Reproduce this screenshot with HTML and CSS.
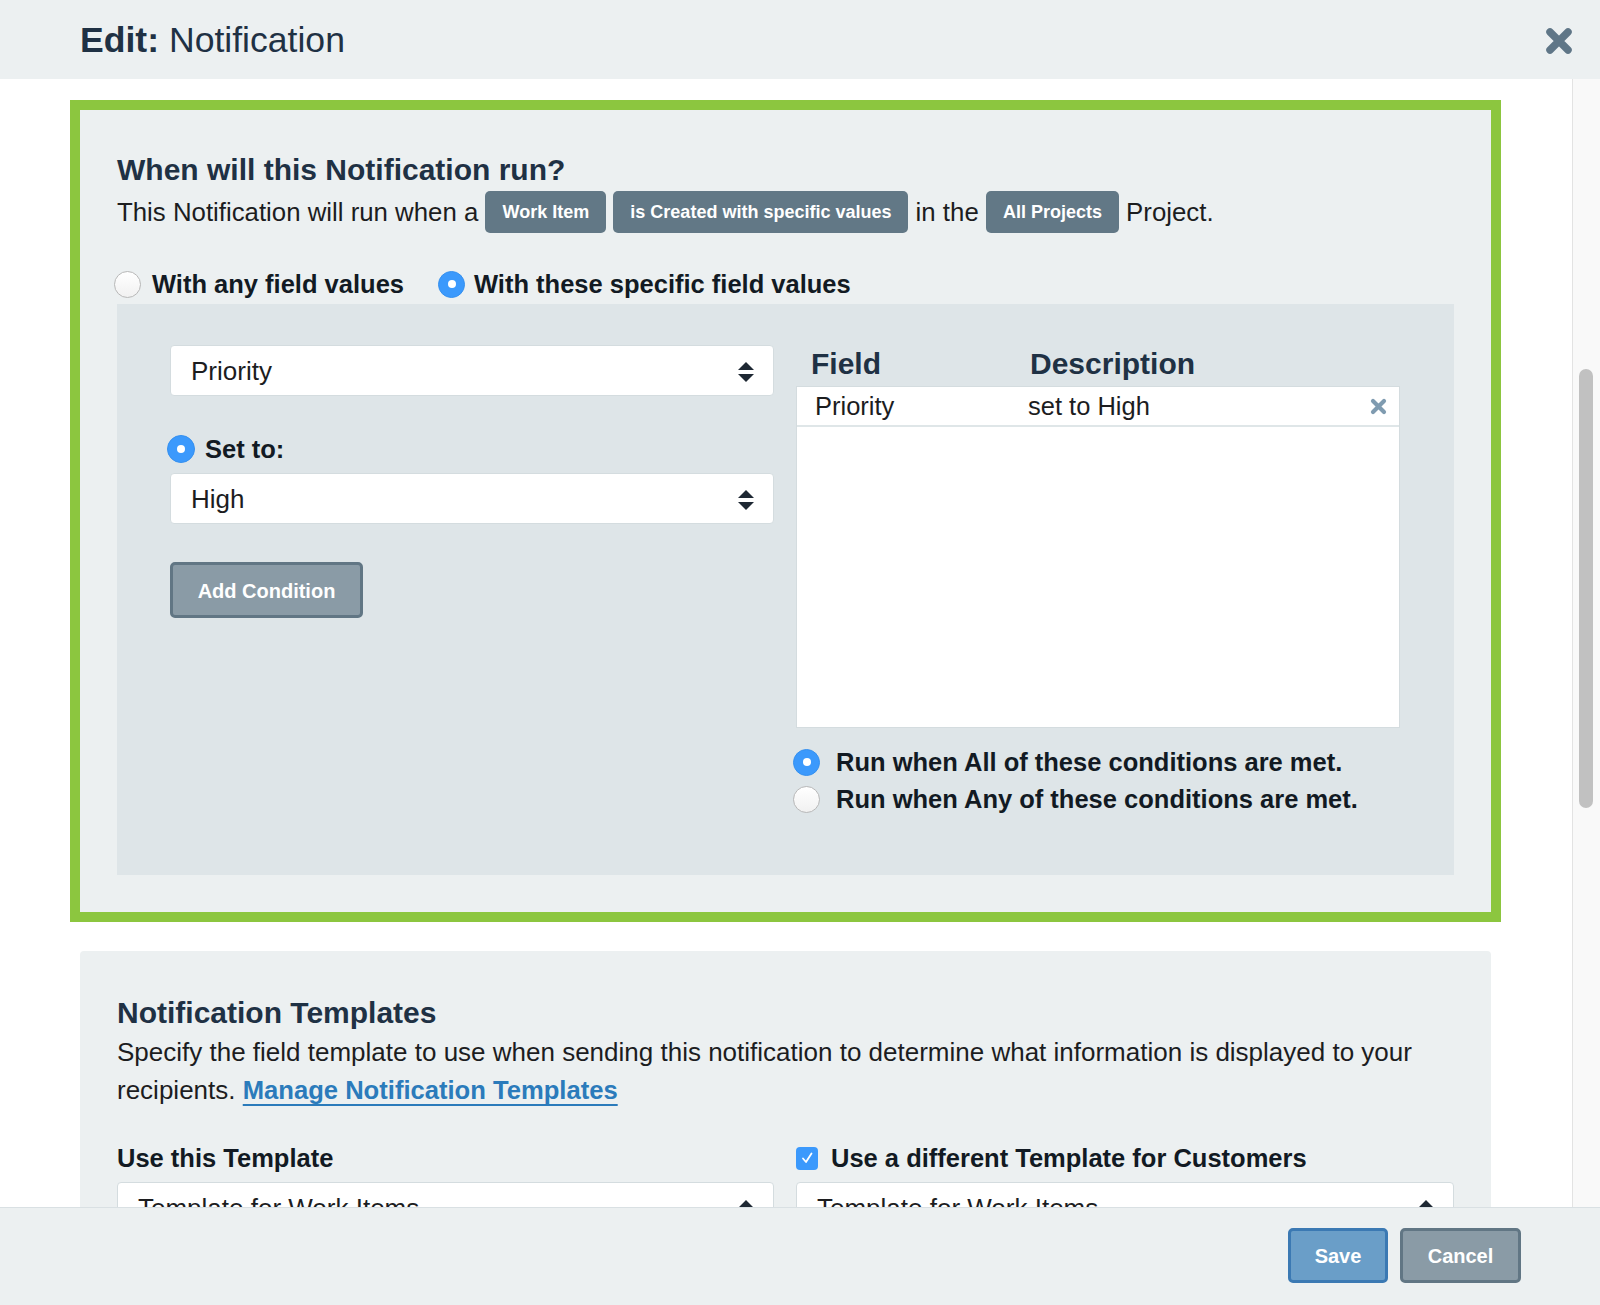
FILE: index.html
```html
<!DOCTYPE html>
<html lang="en">
<head>
<meta charset="utf-8">
<title>Edit: Notification</title>
<link rel="stylesheet" href="styles.css">
</head>
<body>
<div class="modal">
  <header class="modal-header">
    <h1 class="modal-title"><b>Edit:</b> Notification</h1>
    <button class="close" aria-label="Close">
      <svg width="28" height="30" viewBox="0 0 28 30"><path d="M5 6 L23 24 M23 6 L5 24" stroke="#5f7687" stroke-width="7.5" stroke-linecap="round" fill="none"/></svg>
    </button>
  </header>

  <div class="modal-body">
    <div class="content">
      <section class="card card-focus">
        <h2 class="card-title">When will this Notification run?</h2>
        <p class="trigger">This Notification will run when a <span class="pill">Work Item</span> <span class="pill">is Created with specific values</span> in the <span class="pill">All Projects</span> Project.</p>

        <div class="mode">
          <label class="radio mode-any"><span class="dot"></span>With any field values</label>
          <label class="radio on"><span class="dot"></span>With these specific field values</label>
        </div>

        <div class="panel">
          <div class="panel-left">
            <div class="select"><span>Priority</span>
              <svg class="updown" width="16" height="20" viewBox="0 0 16 20"><path d="M8 0 L16 8 L0 8 Z M0 12 L16 12 L8 20 Z" fill="#1e2833"/></svg>
            </div>
            <label class="radio on set-to"><span class="dot"></span>Set to:</label>
            <div class="select select-high"><span>High</span>
              <svg class="updown" width="16" height="20" viewBox="0 0 16 20"><path d="M8 0 L16 8 L0 8 Z M0 12 L16 12 L8 20 Z" fill="#1e2833"/></svg>
            </div>
            <button class="btn btn-gray add-btn">Add Condition</button>
          </div>
          <div class="panel-right">
            <div class="cond-head"><span class="col-field">Field</span><span>Description</span></div>
            <div class="cond-table">
              <div class="cond-row">
                <span class="col-field">Priority</span>
                <span class="col-desc">set to High</span>
                <svg class="row-x" width="17" height="17" viewBox="0 0 17 17"><path d="M3 3 L14 14 M14 3 L3 14" stroke="#7f9bb0" stroke-width="4.2" stroke-linecap="round" fill="none"/></svg>
              </div>
            </div>
            <div class="run">
              <label class="radio on run-opt"><span class="dot"></span>Run when All of these conditions are met.</label>
              <label class="radio run-opt"><span class="dot"></span>Run when Any of these conditions are met.</label>
            </div>
          </div>
        </div>
      </section>

      <section class="card card-templates">
        <h2 class="card-title">Notification Templates</h2>
        <p class="desc">Specify the field template to use when sending this notification to determine what information is displayed to your recipients. <a class="link" href="#">Manage Notification Templates</a></p>
        <div class="tpl-grid">
          <div class="tpl-col">
            <div class="tpl-label">Use this Template</div>
            <div class="select tpl-select"><span>Template for Work Items</span>
              <svg class="updown" width="16" height="20" viewBox="0 0 16 20"><path d="M8 0 L16 8 L0 8 Z M0 12 L16 12 L8 20 Z" fill="#1e2833"/></svg>
            </div>
          </div>
          <div class="tpl-col">
            <label class="tpl-label check-label"><span class="checkbox"><svg width="14" height="14" viewBox="0 0 14 14"><path d="M3 7.5 L6 11 L11.5 2.5" stroke="#fff" stroke-width="1.8" fill="none" stroke-linecap="round" stroke-linejoin="round"/></svg></span>Use a different Template for Customers</label>
            <div class="select tpl-select"><span>Template for Work Items</span>
              <svg class="updown" width="16" height="20" viewBox="0 0 16 20"><path d="M8 0 L16 8 L0 8 Z M0 12 L16 12 L8 20 Z" fill="#1e2833"/></svg>
            </div>
          </div>
        </div>
      </section>
    </div>
    <div class="scrollbar"><div class="thumb"></div></div>
  </div>

  <footer class="modal-footer">
    <button class="btn btn-blue">Save</button>
    <button class="btn btn-gray">Cancel</button>
  </footer>
</div>
</body>
</html>
```

FILE: styles.css
```css
* { box-sizing: border-box; margin: 0; padding: 0; }
html, body { width: 1600px; height: 1305px; overflow: hidden; }
body {
  font-family: "Liberation Sans", Arial, Helvetica, sans-serif;
  color: #1c1d1f;
  background: #fff;
}

.modal { display: flex; flex-direction: column; height: 1305px; }

.modal-header {
  height: 79px;
  flex: none;
  background: #ecf0f1;
  display: flex;
  align-items: center;
  justify-content: space-between;
  padding: 0 27px 0 80px;
}
.modal-title { font-size: 35.6px; font-weight: 400; color: #1f3144; margin-top: 2px; }
.modal-title b { font-weight: 700; }
.close { border: 0; background: none; display: block; width: 28px; height: 30px; margin-top: 2px; }
.close svg { display: block; }

.modal-body { flex: 1; display: flex; min-height: 0; overflow: hidden; }
.content { flex: 1; padding: 21px 0 0 70px; overflow: hidden; }
.scrollbar {
  width: 28px;
  flex: none;
  background: #f9f9f9;
  border-left: 1px solid #e3e3e3;
  padding: 290px 0 0 6px;
}
.thumb { width: 14px; height: 439px; border-radius: 7px; background: #c1c1c1; }

.card { background: #ecf0f1; }
.card-focus {
  border: 10px solid #8cc63f;
  width: 1431px;
  height: 822px;
  padding: 42px 37px 0;
}
.card-templates {
  width: 1411px;
  margin: 29px 0 0 10px;
  border-radius: 4px;
  padding: 44px 37px 40px;
}

.card-title { font-size: 30px; line-height: 36px; font-weight: 700; color: #1f3144; }

.trigger { font-size: 25.8px; line-height: 42px; margin-top: 3px; color: #1c1d1f; }
.pill {
  display: inline-block;
  vertical-align: top;
  height: 42px;
  line-height: 42px;
  padding: 0 17px;
  border-radius: 5px;
  background: #627886;
  color: #fff;
  font-size: 18px;
  font-weight: 700;
}

.radio {
  display: flex;
  align-items: center;
  font-size: 25.5px;
  font-weight: 700;
  color: #121a23;
}
.dot {
  position: relative;
  flex: none;
  width: 27px;
  height: 27px;
  border-radius: 50%;
  border: 1px solid #b8b8b8;
  background: linear-gradient(#ffffff, #f1f1f1);
  margin-right: 10px;
}
.radio.on .dot { background: #3b99fc; border-color: #3590ef; }
.radio.on .dot::after {
  content: "";
  position: absolute;
  left: 50%;
  top: 50%;
  width: 8px;
  height: 8px;
  margin: -4px 0 0 -4px;
  border-radius: 50%;
  background: #fff;
}

.mode { display: flex; align-items: center; height: 40px; margin-top: 31px; margin-left: -3px; }
.mode-any { margin-right: 34px; }
.mode-any .dot { margin-right: 11px; }
.mode .radio.on .dot { margin-right: 9px; }

.panel {
  margin-top: 0;
  height: 571px;
  background: #dee5e8;
  display: grid;
  grid-template-columns: 657px 1fr;
  column-gap: 22px;
}
.panel-left { padding: 41px 0 0 53px; }
.panel-right { padding: 42px 54px 0 0; }

.select {
  height: 51px;
  background: #fff;
  border: 1px solid #d4dcdf;
  border-radius: 4px;
  display: flex;
  align-items: center;
  justify-content: space-between;
  padding: 2px 19px 0 20px;
  font-size: 26px;
  color: #1c1d1f;
}
.updown { display: block; flex: none; }

.set-to { margin-top: 39px; height: 28px; margin-left: -3px; }
.set-to .dot { width: 28px; height: 28px; }
.select-high { margin-top: 10px; }

.btn {
  display: inline-flex;
  align-items: center;
  justify-content: center;
  height: 55px;
  padding: 0 24px;
  border-radius: 5px;
  border: 3px solid;
  font-family: inherit;
  font-size: 20px;
  font-weight: 700;
  color: #fff;
}
.btn-gray { background: #8a9ba6; border-color: #617684; }
.btn-blue { background: #6a9ec8; border-color: #3b79b3; }
.add-btn { margin-top: 38px; height: 56px; width: 193px; padding-top: 3px; }

.cond-head {
  display: flex;
  height: 36px;
  line-height: 36px;
  font-size: 30px;
  font-weight: 700;
  color: #1f3144;
  padding-left: 15px;
}
.cond-head .col-field { width: 219px; }
.cond-table {
  margin-top: 4px;
  height: 342px;
  background: #fff;
  border: 1px solid #d4dcdf;
}
.cond-row {
  height: 40px;
  display: flex;
  align-items: center;
  padding: 1px 12px 0 18px;
  font-size: 25.5px;
  border-bottom: 2px solid #dfe6e8;
}
.cond-row .col-field { width: 213px; }
.cond-row .col-desc { flex: 1; }
.row-x { display: block; flex: none; }

.run { margin-top: 18px; display: flex; flex-direction: column; gap: 5px; }
.run-opt { height: 32px; margin-left: -3px; }
.run-opt .dot { margin-right: 16px; }

.desc { font-size: 26px; line-height: 38px; margin-top: 2px; color: #1c1d1f; }
.link {
  color: #2b7bbb;
  font-weight: 700;
  font-size: 25.6px;
  text-decoration: underline;
  text-decoration-thickness: 2px;
  text-underline-offset: 5px;
}

.tpl-grid {
  display: grid;
  grid-template-columns: 657px 1fr;
  column-gap: 22px;
  margin-top: 33px;
}
.tpl-label {
  height: 32px;
  display: flex;
  align-items: center;
  font-size: 25.5px;
  font-weight: 700;
  color: #121a23;
}
.checkbox {
  width: 22px;
  height: 23px;
  border-radius: 4px;
  background: #3b99fc;
  display: flex;
  align-items: center;
  justify-content: center;
  margin-right: 13px;
  flex: none;
}
.checkbox svg { display: block; }
.tpl-select { margin-top: 8px; padding-left: 20px; }
.tpl-select .updown { align-self: flex-start; margin-top: 15px; }

.modal-footer {
  height: 98px;
  flex: none;
  border-top: 1px solid #d9e0e3;
  background: #ecf0f1;
  display: flex;
  justify-content: flex-end;
  align-items: flex-start;
  gap: 12px;
  padding: 20px 79px 0 0;
}
.modal-footer .btn { padding-top: 2px; }
.modal-footer .btn-blue { width: 100px; }
.modal-footer .btn-gray { width: 121px; }
```
